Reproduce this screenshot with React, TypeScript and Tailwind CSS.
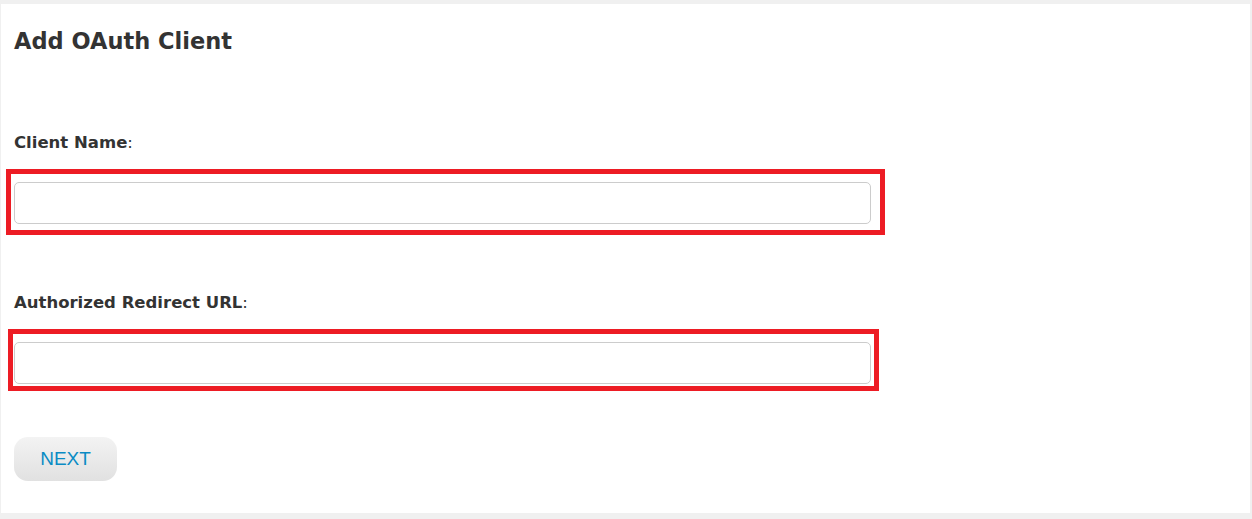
import React from "react";

export default function App() {
  return (
    <div className="min-h-screen bg-[#f0f0f0] pt-[4px] pl-[1px] pr-[2px] pb-[6px] font-['DejaVu_Sans',sans-serif]">
      <div className="h-[509px] bg-white px-[13px] pt-[26px] flex flex-col items-start">
        <h1 className="text-[22.5px] leading-[23px] font-bold text-[#333333]">Add OAuth Client</h1>

        <label className="mt-[81px] text-[16.5px] leading-[17px] font-bold text-[#333333]">
          Client Name<span className="font-normal">:</span>
        </label>
        <div className="relative mt-[31px]">
          <input
            type="text"
            className="block w-[857px] h-[42px] rounded-[5px] border border-[#cccccc] bg-white outline-none"
          />
          <div className="absolute pointer-events-none left-[-8px] right-[-14px] top-[-13px] bottom-[-11px] border-[5px] border-[#ed1c24]" />
        </div>

        <label className="mt-[70px] text-[16.5px] leading-[17px] font-bold text-[#333333]">
          Authorized Redirect URL<span className="font-normal">:</span>
        </label>
        <div className="relative mt-[31px]">
          <input
            type="text"
            className="block w-[857px] h-[42px] rounded-[5px] border border-[#cccccc] bg-white outline-none"
          />
          <div className="absolute pointer-events-none left-[-6px] right-[-8px] top-[-13px] bottom-[-7px] border-[5px] border-[#ed1c24]" />
        </div>

        <button
          type="button"
          className="mt-[53px] w-[103px] h-[44px] rounded-[14px] bg-gradient-to-b from-[#f3f3f3] to-[#e1e1e1] text-[#0a8bc4] text-[19px] font-['Liberation_Sans',sans-serif] flex items-center justify-center"
        >
          NEXT
        </button>
      </div>
    </div>
  );
}
